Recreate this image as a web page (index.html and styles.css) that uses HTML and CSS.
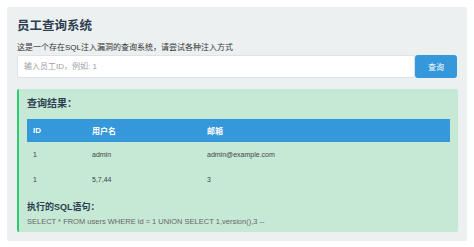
FILE: index.html
```html
<!DOCTYPE html>
<html lang="zh-CN">
<head>
    <meta charset="UTF-8">
    <title>员工查询系统</title>
    <link rel="stylesheet" href="styles.css">
</head>
<body>
    <div class="container">
        <h1>员工查询系统</h1>
        <p class="desc">这是一个存在SQL注入漏洞的查询系统，请尝试各种注入方式</p>

        <form class="search">
            <input type="text" placeholder="输入员工ID，例如: 1">
            <button type="button">查询</button>
        </form>

        <div class="result">
            <h3>查询结果：</h3>
            <table>
                <thead>
                    <tr>
                        <th class="col-id">ID</th>
                        <th class="col-name">用户名</th>
                        <th>邮箱</th>
                    </tr>
                </thead>
                <tbody>
                    <tr>
                        <td>1</td>
                        <td>admin</td>
                        <td>admin@example.com</td>
                    </tr>
                    <tr>
                        <td>1</td>
                        <td>5,7,44</td>
                        <td>3</td>
                    </tr>
                </tbody>
            </table>
            <h4>执行的SQL语句：</h4>
            <p class="sql">SELECT * FROM users WHERE id = 1 UNION SELECT 1,version(),3 --</p>
        </div>
    </div>
</body>
</html>
```

FILE: styles.css
```css
/* Página */
body {
    margin: 7px;
    background-color: #ffffff;
    font-family: "Liberation Sans", "Noto Sans CJK SC", sans-serif;
    color: #333333;
}

/* Caja principal gris */
.container {
    background-color: #ecf0f1;
    padding: 10px 10px 9px 10px;
    border-radius: 2px;
    box-shadow: 0 1px 2px rgba(0, 0, 0, 0.05);
}

h1 {
    margin: 0;
    font-size: 12.5px;
    line-height: 18px;
    color: #2c3e50;
}

.desc {
    margin: 7px 0 1px 0;
    font-size: 8px;
    line-height: 12px;
    color: #333333;
}

/* Formulario de búsqueda */
.search {
    display: flex;
    margin: 0;
}

.search input {
    flex: 1;
    height: 23px;
    box-sizing: border-box;
    margin: 0;
    padding: 0 6px;
    border: 1px solid #dde3e6;
    border-radius: 2px;
    background-color: #ffffff;
    font-family: inherit;
    font-size: 8px;
}

.search input::placeholder {
    color: #9aa1a6;
}

.search button {
    width: 42px;
    height: 23px;
    margin: 0;
    border: none;
    border-radius: 3px;
    background-color: #3498db;
    color: #ffffff;
    font-family: inherit;
    font-size: 8px;
}

/* Resultado */
.result {
    margin-top: 11px;
    margin-right: -1px;
    padding: 9px 8px 4px 8px;
    background-color: #c6e9d6;
    border-left: 2px solid #2ecc71;
    border-radius: 2px;
}

.result h3 {
    margin: 0 0 9px 0;
    font-size: 10px;
    line-height: 12px;
    color: #2c3e50;
}

table {
    width: 100%;
    border-collapse: collapse;
    font-size: 7px;
}

th {
    height: 23px;
    padding: 0 6px;
    text-align: left;
    background-color: #3498db;
    color: #ffffff;
    font-size: 8px;
    font-weight: bold;
}

td {
    height: 25px;
    padding: 0 6px;
    color: #444444;
}

.col-id {
    width: 47px;
}

.col-name {
    width: 103px;
}

.result h4 {
    margin: 9px 0 3px 0;
    font-size: 9px;
    line-height: 12px;
    color: #2c3e50;
}

.sql {
    margin: 0;
    font-size: 7.5px;
    line-height: 12px;
    color: #666666;
}
```
